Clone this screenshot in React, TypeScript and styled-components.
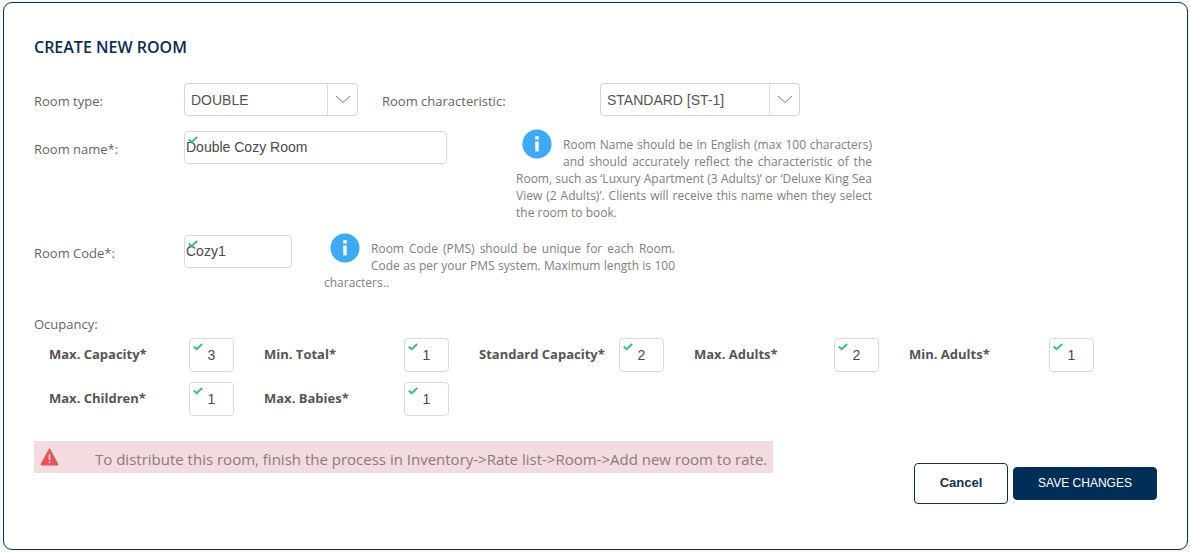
import React, { useId } from "react";
import styled, { createGlobalStyle } from "styled-components";

const GlobalStyle = createGlobalStyle`
  *, *::before, *::after { box-sizing: border-box; }
  body {
    margin: 0;
    background: #f3f9fb;
    font-family: "Open Sans", sans-serif;
    font-size: 13px;
    line-height: 18px;
    color: #666;
  }
`;

const Card = styled.form`
  margin: 2px 2px 2px 3px;
  padding: 33px 30px 45px;
  background: #fff;
  border: 1px solid #12304a;
  border-radius: 9px;
`;

const Title = styled.h1`
  margin: 0 0 23px;
  font-size: 16px;
  line-height: 22px;
  font-weight: 600;
  color: #0a2c54;
`;

const Rows = styled.div`
  display: flex;
  flex-direction: column;
  gap: 11px;
`;

const Row = styled.div`
  display: flex;
  align-items: flex-start;
`;

const Label = styled.label<{ $width: number }>`
  flex: none;
  width: ${(p) => p.$width}px;
  padding-top: 11px;
`;

const Field = styled.div<{ $width: number; $gap?: number }>`
  position: relative;
  flex: none;
  width: ${(p) => p.$width}px;
  margin: 2px ${(p) => p.$gap ?? 0}px 2px 0;
`;

const SelectBox = styled.select`
  appearance: none;
  display: block;
  width: 100%;
  height: 33px;
  padding: 0 32px 0 6px;
  border: 1px solid #d6d6d6;
  border-radius: 4px;
  background: #fff;
  color: #555;
  font: 14px "Liberation Sans", Arial, sans-serif;
`;

const Arrow = styled.span`
  position: absolute;
  top: 1px;
  right: 1px;
  bottom: 1px;
  width: 30px;
  display: flex;
  align-items: center;
  justify-content: center;
  border-left: 1px solid #dcdcd2;
  pointer-events: none;
`;

const TextBox = styled.input<{ $small?: boolean }>`
  display: block;
  width: 100%;
  height: ${(p) => (p.$small ? 34 : 33)}px;
  padding: ${(p) => (p.$small ? "0 1px" : "0 1px 1px")};
  border: 1px solid #dadada;
  border-radius: 4px;
  background: #fff;
  color: #4a4a4a;
  font: 14px "Liberation Sans", Arial, sans-serif;
  text-align: ${(p) => (p.$small ? "center" : "left")};
`;

const TickMark = styled.svg`
  position: absolute;
  top: 5px;
  left: 4px;
  pointer-events: none;
`;

const Info = styled.p<{ $width: number }>`
  flex: 0 1 ${(p) => p.$width}px;
  margin: 0;
  padding: 0 0 1px;
  font-size: 12px;
  line-height: 17px;
  text-align: justify;
  color: #808080;
`;

const InfoIcon = styled.svg`
  float: left;
  margin: 0 11px 0 6px;
`;

const InfoText = styled.span`
  display: block;
  padding-top: 7px;
`;

const Occupancy = styled.fieldset`
  margin: 23px 0 0;
  padding: 0;
  border: 0;
`;

const Legend = styled.legend`
  padding: 0 0 5px;
`;

const Grid = styled.div`
  display: grid;
  grid-template-columns: repeat(auto-fill, 215px);
  row-gap: 10px;
  padding-left: 15px;
`;

const Cell = styled.div`
  display: flex;
  align-items: center;
`;

const CellLabel = styled.label`
  width: 140px;
  padding-bottom: 2px;
  font-weight: 700;
  color: #555;
`;

const CellField = styled.div`
  position: relative;
  width: 45px;
`;

const Footer = styled.div`
  display: flex;
  align-items: flex-start;
  justify-content: space-between;
  margin-top: 25px;
`;

const Alert = styled.div`
  display: flex;
  align-items: flex-start;
  gap: 36px;
  padding: 7px 6px 3px;
  background: #f2dcdf;
  color: #8a7a7c;
  font-size: 15px;
  line-height: 22px;
`;

const Actions = styled.div`
  display: flex;
  align-items: center;
  gap: 5px;
  margin-top: 22px;
`;

const Button = styled.button<{ $primary?: boolean }>`
  width: ${(p) => (p.$primary ? 144 : 94)}px;
  height: ${(p) => (p.$primary ? 33 : 41)}px;
  padding: 0 0 2px;
  border: 1px solid ${(p) => (p.$primary ? "#002e57" : "#12304a")};
  border-radius: 4px;
  background: ${(p) => (p.$primary ? "#002e57" : "#fff")};
  color: ${(p) => (p.$primary ? "#fff" : "#12304a")};
  font-family: "Liberation Sans", Arial, sans-serif;
  font-size: ${(p) => (p.$primary ? 12 : 13)}px;
  font-weight: ${(p) => (p.$primary ? 400 : 700)};
`;

const Tick = () => (
  <TickMark width="10" height="8" viewBox="0 0 10 8" aria-hidden="true">
    <path d="M0.8 3.6 3.6 6.2 9.2 1" fill="none" stroke="#3dba8c" strokeWidth="2" />
  </TickMark>
);

const SelectField = (props: { id: string; width: number; gap?: number; value: string }) => (
  <Field $width={props.width} $gap={props.gap}>
    <SelectBox id={props.id} defaultValue={props.value}>
      <option>{props.value}</option>
    </SelectBox>
    <Arrow>
      <svg width="16" height="9" viewBox="0 0 16 9" aria-hidden="true">
        <path d="M1 1 8 7.5 15 1" fill="none" stroke="#777" strokeWidth="1" />
      </svg>
    </Arrow>
  </Field>
);

const TextField = (props: { id: string; width: number; gap: number; value: string }) => (
  <Field $width={props.width} $gap={props.gap}>
    <TextBox id={props.id} type="text" defaultValue={props.value} />
    <Tick />
  </Field>
);

const Hint = ({ width, children }: { width: number; children: React.ReactNode }) => (
  <Info $width={width}>
    <InfoIcon width="30" height="30" viewBox="0 0 30 30" aria-hidden="true">
      <circle cx="15" cy="15" r="14.6" fill="#3fa9f5" />
      <rect x="13.3" y="7.2" width="3.4" height="3.4" fill="#fff" />
      <rect x="13.3" y="12.4" width="3.4" height="10" fill="#fff" />
    </InfoIcon>
    <InfoText>{children}</InfoText>
  </Info>
);

const NumberCell = ({ label, value }: { label: string; value: string }) => {
  const id = useId();
  return (
    <Cell>
      <CellLabel htmlFor={id}>{label}</CellLabel>
      <CellField>
        <TextBox id={id} $small type="text" inputMode="numeric" defaultValue={value} />
        <Tick />
      </CellField>
    </Cell>
  );
};

const capacities = [
  ["Max. Capacity*", "3"],
  ["Min. Total*", "1"],
  ["Standard Capacity*", "2"],
  ["Max. Adults*", "2"],
  ["Min. Adults*", "1"],
  ["Max. Children*", "1"],
  ["Max. Babies*", "1"],
];

export default function App() {
  return (
    <>
      <GlobalStyle />
      <Card onSubmit={(e) => e.preventDefault()}>
        <Title>CREATE NEW ROOM</Title>
        <Rows>
          <Row>
            <Label htmlFor="type" $width={150}>Room type:</Label>
            <SelectField id="type" width={174} gap={24} value="DOUBLE" />
            <Label htmlFor="characteristic" $width={218}>Room characteristic:</Label>
            <SelectField id="characteristic" width={200} value="STANDARD [ST-1]" />
          </Row>
          <Row>
            <Label htmlFor="name" $width={150}>Room name*:</Label>
            <TextField id="name" width={263} gap={69} value="Double Cozy Room" />
            <Hint width={356}>
              Room Name should be in English (max 100 characters) and should accurately reflect the
              characteristic of the Room, such as ‘Luxury Apartment (3 Adults)’ or ‘Deluxe King Sea
              View (2 Adults)’. Clients will receive this name when they select the room to book.
            </Hint>
          </Row>
          <Row>
            <Label htmlFor="code" $width={150}>Room Code*:</Label>
            <TextField id="code" width={108} gap={32} value="Cozy1" />
            <Hint width={351}>
              Room Code (PMS) should be unique for each Room. Code as per your PMS system. Maximum
              length is 100 characters..
            </Hint>
          </Row>
        </Rows>
        <Occupancy>
          <Legend>Ocupancy:</Legend>
          <Grid>
            {capacities.map(([label, value]) => (
              <NumberCell key={label} label={label} value={value} />
            ))}
          </Grid>
        </Occupancy>
        <Footer>
          <Alert role="alert">
            <svg width="19" height="18" viewBox="0 0 19 18" aria-hidden="true">
              <path
                d="M9.5 1.6 17.4 16.4H1.6Z"
                fill="#e4555a"
                stroke="#e4555a"
                strokeWidth="2"
                strokeLinejoin="round"
              />
              <path d="M9.5 6V12M9.5 13.4V15" stroke="#f6dcdc" strokeWidth="1.5" />
            </svg>
            <span>
              To distribute this room, finish the process in Inventory-&gt;Rate list-&gt;Room-&gt;Add new room to rate.
            </span>
          </Alert>
          <Actions>
            <Button type="button">Cancel</Button>
            <Button type="submit" $primary>SAVE CHANGES</Button>
          </Actions>
        </Footer>
      </Card>
    </>
  );
}
